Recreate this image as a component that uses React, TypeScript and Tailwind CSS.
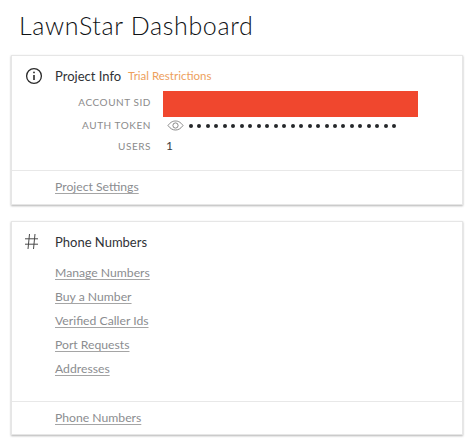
import React from "react";

const dots = Array.from({ length: 25 });

function Label({ children }: { children: React.ReactNode }) {
  return (
    <div className="w-[139px] shrink-0 text-right text-[10px] leading-[22px] tracking-[0.55px] text-[#8b8b8b]">
      {children}
    </div>
  );
}

function CardLink({ children }: { children: React.ReactNode }) {
  return (
    <a className="text-[12.2px] leading-[24px] text-[#8b8d90] underline underline-offset-2 decoration-[#a5a5a5]">
      {children}
    </a>
  );
}

function InfoIcon() {
  return (
    <svg width="18" height="18" viewBox="0 0 18 18" fill="none" stroke="#2a2a2a" strokeWidth="1.3">
      <circle cx="9" cy="9" r="7.4" />
      <path d="M9 8v5" strokeWidth="1.6" />
      <circle cx="9" cy="5.4" r="0.9" fill="#2a2a2a" stroke="none" />
    </svg>
  );
}

function HashIcon() {
  return (
    <svg width="15" height="17" viewBox="0 0 15 17" fill="none" stroke="#4a4a4a" strokeWidth="1">
      <path d="M5.500 1 4 16M11 1 9.500 16M1 5.800h13M1 11.200h13" />
    </svg>
  );
}

function EyeIcon() {
  return (
    <svg width="17" height="11" viewBox="0 0 17 11" fill="none" stroke="#7c7c7c" strokeWidth="0.9">
      <path d="M1 5.500C3.500 2 6 1 8.500 1s5 1 7.500 4.500C13.500 9 11 10 8.500 10S3.500 9 1 5.500Z" />
      <circle cx="8.500" cy="5.500" r="2.600" />
    </svg>
  );
}

export default function App() {
  return (
    <div className="h-[446px] w-[474px] overflow-hidden bg-white pl-[11px] pr-[11px] font-['Lato',sans-serif]">
      <h1 className="pl-[8px] pt-[9px] text-[25px] font-light leading-[32px] tracking-[0.65px] text-[#0f1114]">
        LawnStar Dashboard
      </h1>

      <section className="mt-[14px] h-[150px] border border-[#e6e6e6] bg-white shadow-[0_1px_2px_rgba(0,0,0,0.3)]">
        <div className="flex h-[35px] items-start pt-[10px]">
          <div className="flex w-[43px] justify-center pt-[1px]">
            <InfoIcon />
          </div>
          <span className="text-[13px] leading-[20px] text-[#303236]">Project Info</span>
          <span className="ml-[7px] text-[11.5px] leading-[20px] text-[#eda05c]">Trial Restrictions</span>
        </div>
        <div className="flex h-[26px] items-start">
          <Label>ACCOUNT SID</Label>
          <div className="ml-[12px] h-[26px] w-[255px] bg-[#f0472e]" />
        </div>
        <div className="flex h-[16px] items-center">
          <Label>AUTH TOKEN</Label>
          <div className="ml-[16px] flex items-center">
            <EyeIcon />
            <div className="ml-[5px] flex gap-[4.47px] pt-[1px]">
              {dots.map((_, i) => (
                <span key={i} className="h-[4px] w-[4px] rounded-full bg-[#25272a]" />
              ))}
            </div>
          </div>
        </div>
        <div className="mt-[2px] flex h-[22px] items-center">
          <Label>USERS</Label>
          <span className="ml-[15px] text-[12px] text-[#3a3c40]">1</span>
        </div>
        <div className="mt-[13px] h-[34px] border-t border-[#e8e8e8] pl-[43px] pt-[2px]">
          <CardLink>Project Settings</CardLink>
        </div>
      </section>

      <section className="mt-[16px] h-[214px] border border-[#e6e6e6] bg-white shadow-[0_1px_2px_rgba(0,0,0,0.3)]">
        <div className="flex h-[33px] items-start pt-[10px]">
          <div className="flex w-[39px] justify-center pt-[1px]">
            <HashIcon />
          </div>
          <span className="ml-[4px] text-[13px] leading-[20px] text-[#303236]">Phone Numbers</span>
        </div>
        <div className="mt-[6px] flex h-[140px] flex-col pl-[43px]">
          <CardLink>Manage Numbers</CardLink>
          <CardLink>Buy a Number</CardLink>
          <CardLink>Verified Caller Ids</CardLink>
          <CardLink>Port Requests</CardLink>
          <CardLink>Addresses</CardLink>
        </div>
        <div className="h-[33px] border-t border-[#e8e8e8] pl-[43px] pt-[2px]">
          <CardLink>Phone Numbers</CardLink>
        </div>
      </section>
    </div>
  );
}
